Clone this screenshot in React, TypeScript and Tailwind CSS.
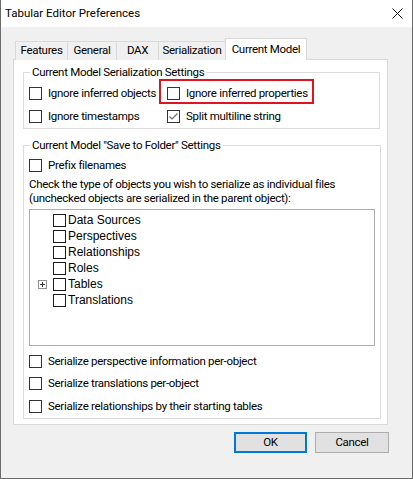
import React from 'react'

const ui = { fontFamily: 'Roboto, "Noto Sans", sans-serif' }
const tree = { fontFamily: '"Liberation Sans", Arial, sans-serif' }

const tabs = [
  { label: 'Features', w: 'w-[53px]' },
  { label: 'General', w: 'w-[50px]' },
  { label: 'DAX', w: 'w-[43px]' },
  { label: 'Serialization', w: 'w-[68px]' },
]

const treeItems = ['Data Sources', 'Perspectives', 'Relationships', 'Roles', 'Tables', 'Translations']

const txt = 'text-[11.5px] tracking-[-0.3px]'

const Box: React.FC<{ checked?: boolean }> = ({ checked }) => (
  <span className="w-[13px] h-[13px] border border-[#333333] bg-white shrink-0 flex items-center justify-center">
    {checked && (
      <svg width="11" height="11" viewBox="0 0 11 11">
        <path d="M1.5 5.5 L4 8 L9.5 2.5" fill="none" stroke="#6d6d6d" strokeWidth="1.2" />
      </svg>
    )}
  </span>
)

const Check: React.FC<{ label: string; checked?: boolean; className?: string }> = ({ label, checked, className }) => (
  <div className={`flex items-center h-[16px] gap-[6px] ${className ?? ''}`}>
    <Box checked={checked} />
    <span className={`${txt} leading-[16px] text-black whitespace-nowrap`}>{label}</span>
  </div>
)

export default function App() {
  return (
    <div
      className="w-[413px] h-[479px] flex flex-col bg-[#f0f0f0] border-l border-r border-b border-[#6b6b6b] text-black"
      style={ui}
    >
      {/* Title bar */}
      <div className="h-[27px] bg-white flex items-center justify-between pl-[4px] pr-[9px] shrink-0">
        <span className="text-[11.5px]">Tabular Editor Preferences</span>
        <svg width="11" height="11" viewBox="0 0 11 11">
          <path d="M0.5 0.5 L10.5 10.5 M10.5 0.5 L0.5 10.5" stroke="#111" strokeWidth="1" />
        </svg>
      </div>

      <div className="pl-[12px] pt-[11px] flex flex-col">
        {/* Tabs */}
        <div className="flex items-end pl-[2px] h-[22px] -mb-px relative z-10">
          {tabs.map((t) => (
            <div
              key={t.label}
              className={`${t.w} h-[19px] border border-[#d9d9d9] border-b-0 -mr-px bg-[#f0f0f0] flex items-center justify-center ${txt}`}
            >
              {t.label}
            </div>
          ))}
          <div className={`w-[82px] h-[22px] border border-[#d9d9d9] border-b-0 bg-white flex justify-center pt-[2px] ${txt}`}>
            Current Model
          </div>
        </div>

        {/* Panel */}
        <div className="w-[375px] h-[366px] bg-white border border-[#d9d9d9] px-[9px] pt-[4px]">
          <fieldset className="border border-[#dcdcdc] px-[5px] pb-[4px] w-[357px]">
            <legend className={`${txt} leading-[16px] px-[2px] ml-[1px]`}>Current Model Serialization Settings</legend>
            <div className="grid grid-cols-[138px_1fr] gap-y-[7px] mt-[5px]">
              <Check label="Ignore inferred objects" />
              <div className="relative">
                <Check label="Ignore inferred properties" />
                <div className="absolute left-[-8px] top-[-6px] w-[155px] h-[25px] border-2 border-[#e0141e] pointer-events-none" />
              </div>
              <Check label="Ignore timestamps" />
              <Check label="Split multiline string" checked />
            </div>
          </fieldset>

          <fieldset className="border border-[#dcdcdc] px-[5px] pb-[4px] w-[357px] mt-[8px]">
            <legend className={`${txt} leading-[16px] px-[2px] ml-[1px]`}>Current Model "Save to Folder" Settings</legend>
            <Check label="Prefix filenames" className="mt-[4px]" />
            <p className={`${txt} leading-[14px] mt-[4px] whitespace-nowrap`}>
              Check the type of objects you wish to serialize as individual files
              <br />
              (unchecked objects are serialized in the parent object):
            </p>
            <div className="w-[346px] h-[137px] border border-[#adadad] mt-[4px] pt-[2px]" style={tree}>
              {treeItems.map((it) => (
                <div key={it} className="h-[16px] flex items-center">
                  <span className="w-[23px] flex justify-end pr-[6px] shrink-0">
                    {it === 'Tables' && (
                      <svg width="9" height="9" viewBox="0 0 9 9">
                        <rect x="0.5" y="0.5" width="8" height="8" fill="#fff" stroke="#919191" />
                        <path d="M2 4.5 H7 M4.5 2 V7" stroke="#333" strokeWidth="1" />
                      </svg>
                    )}
                  </span>
                  <span className="w-[13px] h-[13px] border border-[#1c1c1c] bg-white shrink-0" />
                  <span className="text-[12px] leading-[14px] ml-[2px]">{it}</span>
                </div>
              ))}
            </div>
            <div className="flex flex-col gap-[6px] mt-[7px]">
              <Check label="Serialize perspective information per-object" />
              <Check label="Serialize translations per-object" />
              <Check label="Serialize relationships by their starting tables" className="mt-[1px]" />
            </div>
          </fieldset>
        </div>

        {/* Buttons */}
        <div className="flex justify-end gap-[8px] mt-[7px] pr-[23px]">
          <button className={`w-[73px] h-[21px] border-2 border-[#0078d7] bg-[#e1e1e1] ${txt} leading-none`}>OK</button>
          <button className={`w-[74px] h-[21px] border border-[#adadad] bg-[#e1e1e1] ${txt} leading-none`}>Cancel</button>
        </div>
      </div>
    </div>
  )
}
